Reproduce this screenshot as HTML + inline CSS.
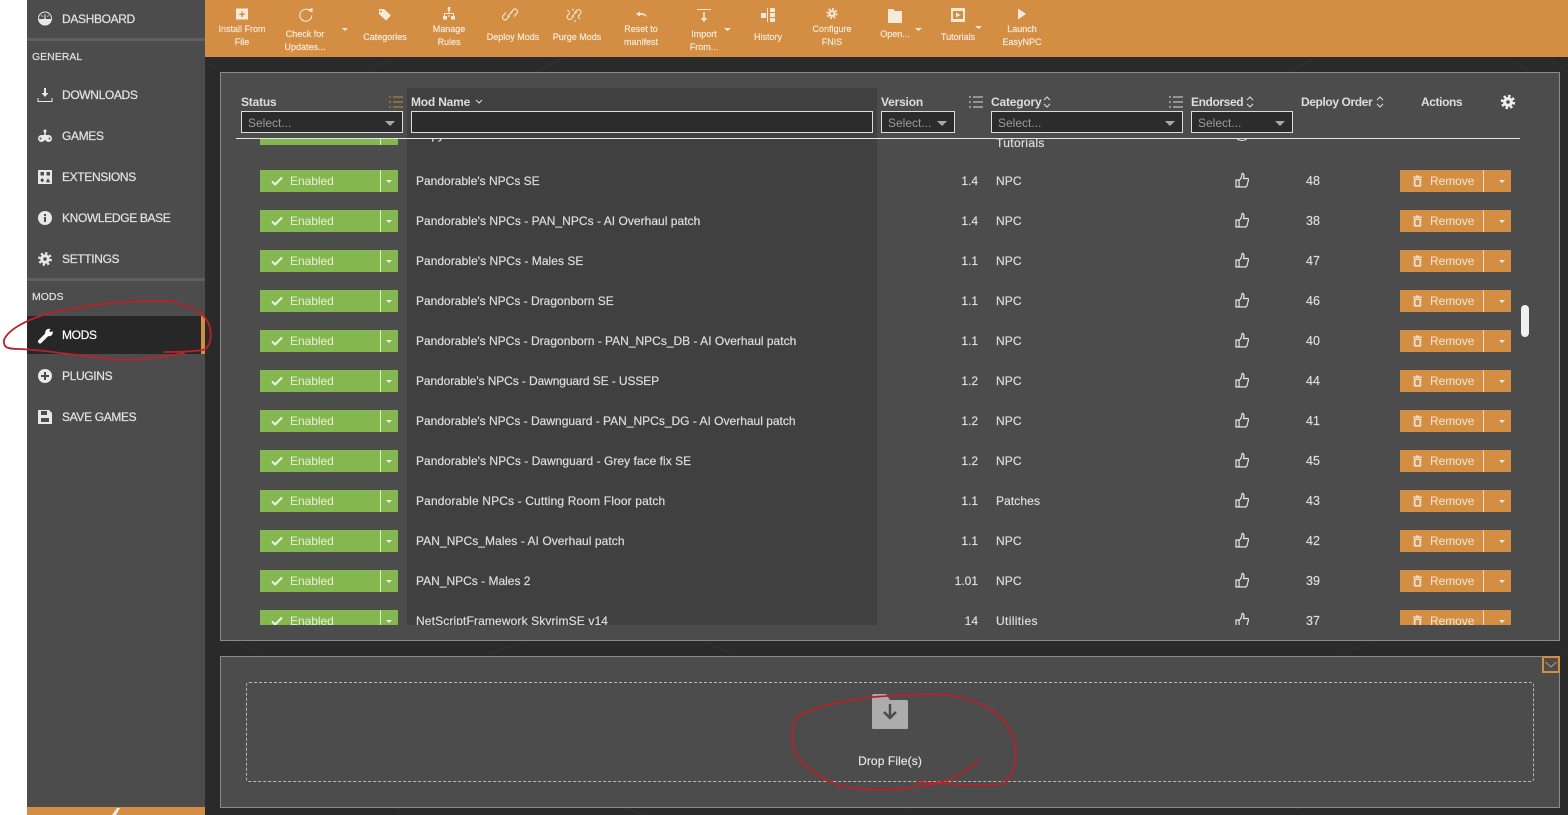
<!DOCTYPE html>
<html><head><meta charset="utf-8"><style>
html,body{margin:0;padding:0;background:#fff}
#p{position:relative;width:1568px;height:815px;overflow:hidden;background:#fff;font-family:"Liberation Sans",sans-serif;color:#ddd}
.a{position:absolute}
.t{position:absolute;white-space:nowrap;line-height:14px}
.n{font-size:12px;left:62px;color:#e4e4e4;letter-spacing:-.35px;-webkit-text-stroke:.2px}
.h{font-size:10.5px;left:32px;color:#e4e4e4;-webkit-text-stroke:.15px}
.c{position:absolute;text-align:center;transform:translateX(-50%);white-space:nowrap;font-size:9px;line-height:13px;color:#f8ecdc;-webkit-text-stroke:.15px}
.th{font-size:12px;font-weight:bold;color:#ddd;top:95px;letter-spacing:-.2px}
.sel{position:absolute;top:111px;height:20px;border:1px solid #ddd;background:#2b2c2b;font-size:12px;line-height:22px;color:#9a9a9a;text-indent:6px;box-sizing:content-box}
.sel i{position:absolute;right:7px;top:9px;border:5px solid transparent;border-top:5px solid #aaa;border-bottom:0}
.r{position:absolute;left:0;width:1340px;height:40px}
.en{position:absolute;left:40px;top:9px;width:138px;height:22px;background:#84b750;color:#e6f0d8;font-size:12px;line-height:22px}
.en b{position:absolute;left:30px;font-weight:normal;letter-spacing:-.05px}
.en u{position:absolute;left:120px;top:0;width:1px;height:22px;background:#dcebc8}
.en s,.rm s{position:absolute;right:6px;top:10px;border:3px solid transparent;border-top:3px solid #eee;border-bottom:0}
.en svg{position:absolute;left:11px;top:6px}
.m{position:absolute;left:196px;top:13px;font-size:12px;line-height:14px;color:#ddd;white-space:nowrap;-webkit-text-stroke:.2px}
.v{position:absolute;right:582px;top:13px;font-size:12px;line-height:14px;color:#ddd;-webkit-text-stroke:.2px}
.g{position:absolute;left:776px;top:13px;font-size:12px;line-height:14px;color:#ddd;letter-spacing:.1px;-webkit-text-stroke:.2px}
.up{position:absolute;left:1015px;top:11px}
.o{position:absolute;left:1086px;top:13px;font-size:12.5px;line-height:14px;color:#ddd;-webkit-text-stroke:.2px}
.rm{position:absolute;left:1180px;top:9px;width:111px;height:22px;background:#d48e43;color:#f4e6d4;font-size:12px;line-height:22px}
.rm b{position:absolute;left:30px;font-weight:normal;letter-spacing:-.05px}
.rm u{position:absolute;left:83px;top:0;width:1px;height:22px;background:#eedcc4}
.rm svg{position:absolute;left:12px;top:5px}
</style></head><body><div id="p">
<svg width="0" height="0" style="position:absolute"><defs>
<symbol id="ck" viewBox="0 0 12 10"><path d="M1 5.500l3.200 3L11 1.500" fill="none" stroke="#f0f6e6" stroke-width="2"/></symbol>
<symbol id="tr" viewBox="0 0 10 12"><path d="M3.500 1.500V.5h3v1H9.500v1.200H.5V1.500zM1.300 3.500h7.400V11.500H1.300zM3 5v5h4V5z" fill="#f4e6d4" fill-rule="evenodd"/></symbol>
<symbol id="th" viewBox="0 0 14 16"><path d="M1 8h3v7H1zM4 8.500C6 7 7 4.500 7 1.500c2-.5 2.500 2 1.500 5h4c1 0 1.200 1 .8 2l-1.300 5c-.3.8-.8 1.500-2 1.500H6c-1 0-1.500-.500-2-1" fill="none" stroke="#e6e6e6" stroke-width="1.200"/></symbol>
</defs></svg>

<!-- background -->
<div class="a" style="left:205px;top:0;width:1363px;height:815px;background:#2a2a2a"></div>
<svg class="a" style="left:205px;top:57px" width="1363" height="758"><g stroke="#333" fill="none"><path d="M0 5L16 15M160 15L190 0M330 15L360 0M1085 15L1110 0M1300 0L1325 15M1340 0L1363 15M30 585L60 598M280 598L320 585M500 585L530 598M1130 598L1170 585M1340 585L1363 598M190 752L230 745M700 752L740 745M1090 752L1130 745M400 745L440 758"/></g></svg>

<!-- sidebar -->
<div class="a" style="left:27px;top:0;width:178px;height:815px;background:#4c4c4c"></div>
<div class="a" style="left:27px;top:38px;width:178px;height:3px;background:#5f5f5f"></div>
<div class="a" style="left:27px;top:278px;width:178px;height:3px;background:#5f5f5f"></div>
<div class="a" style="left:27px;top:316px;width:178px;height:38px;background:#272727"></div>
<div class="a" style="left:201px;top:316px;width:4px;height:38px;background:#d48e43"></div>
<div class="a" style="left:27px;top:807px;width:178px;height:8px;background:#d48e43"></div>
<svg class="a" style="left:105px;top:807px" width="16" height="8"><path d="M7 8L12 1h3L11 8z" fill="#f0f0f0"/></svg>
<div class="t n" style="top:12px">DASHBOARD</div>
<div class="t h" style="top:50px">GENERAL</div>
<div class="t n" style="top:88px">DOWNLOADS</div>
<div class="t n" style="top:129px">GAMES</div>
<div class="t n" style="top:170px">EXTENSIONS</div>
<div class="t n" style="top:211px">KNOWLEDGE BASE</div>
<div class="t n" style="top:252px">SETTINGS</div>
<div class="t h" style="top:290px">MODS</div>
<div class="t n" style="top:328px;color:#fff">MODS</div>
<div class="t n" style="top:369px">PLUGINS</div>
<div class="t n" style="top:410px">SAVE GAMES</div>
<svg class="a" style="left:0;top:0" width="60" height="430"><g fill="#e8e8e8">
<circle cx="45" cy="18.500" r="6.500" fill="none" stroke="#e8e8e8"/><path d="M38.500 19h13a6.500 6.500 0 0 1-13 0z"/><path d="M44.600 14h.8l.3 5h-1.400zM41 15.500l.6-.5 1.400 1.500-.6.5zM49 15.500l-.6-.5-1.400 1.500.6.500z"/>
<path d="M44 88h2v5h2.500L45 97l-3.500-4H44zM38.500 98v3h13v-3h1v4h-15v-4z"/>
<path d="M44.200 130h1.600v5h-1.600z"/><circle cx="45" cy="131" r="1.500"/><circle cx="41.500" cy="138.500" r="3.500"/><circle cx="48.500" cy="138.500" r="3.500"/><rect x="41" y="135" width="8" height="5"/>
<path d="M38 170h14v14H38z"/>
<circle cx="45" cy="218" r="7"/>
<circle cx="45" cy="259" r="4.800"/><circle cx="45" cy="259" r="5.800" fill="none" stroke="#e8e8e8" stroke-width="2.200" stroke-dasharray="2.300 2.250"/>
<circle cx="45" cy="376" r="7"/>
<path d="M38 410h11l3 3v11H38z"/></g>
<g fill="#4c4c4c"><rect x="40.500" y="172" width="3.500" height="3.500"/><rect x="46.500" y="172" width="3.500" height="3.500"/><path d="M42.200 178l2 2.200-2 2.200-2-2.200z"/><path d="M48 178l2.200 4.200h-4.400z"/><rect x="44" y="217" width="2" height="5"/><rect x="44" y="214" width="2" height="2"/><circle cx="45" cy="259" r="1.800"/><rect x="41" y="375" width="8" height="2"/><rect x="44" y="372" width="2" height="8"/><rect x="41" y="411" width="6" height="4"/><rect x="41" y="418" width="8" height="4"/><circle cx="40.500" cy="138.500" r="1"/><circle cx="49.500" cy="138.500" r="1"/></g>
<path d="M40 341.500l8.500-8.500" stroke="#fff" stroke-width="4" stroke-linecap="round" fill="none"/><circle cx="49" cy="332.500" r="3.800" fill="#fff"/><path d="M50 331.500l3.500-3.500" stroke="#272727" stroke-width="2.500" fill="none"/></svg>

<!-- toolbar -->
<div class="a" style="left:205px;top:0;width:1363px;height:57px;background:#d48e43"></div>
<div class="c" style="left:242px;top:23px">Install From<br>File</div>
<div class="c" style="left:305px;top:28px">Check for<br>Updates...</div>
<div class="c" style="left:385px;top:31px">Categories</div>
<div class="c" style="left:449px;top:23px">Manage<br>Rules</div>
<div class="c" style="left:513px;top:31px">Deploy Mods</div>
<div class="c" style="left:577px;top:31px">Purge Mods</div>
<div class="c" style="left:641px;top:23px">Reset to<br>manifest</div>
<div class="c" style="left:704px;top:28px">Import<br>From...</div>
<div class="c" style="left:768px;top:31px">History</div>
<div class="c" style="left:832px;top:23px">Configure<br>FNIS</div>
<div class="c" style="left:895px;top:28px">Open...</div>
<div class="c" style="left:958px;top:31px">Tutorials</div>
<div class="c" style="left:1022px;top:23px">Launch<br>EasyNPC</div>
<svg class="a" style="left:205px;top:0" width="840" height="40"><g fill="#f6ead9">
<path d="M31 8.500h12v11H31zM36.300 11.500v2h-2v1.500h2v2h1.500v-2h2v-1.500h-2v-2z" fill-rule="evenodd"/>
<path d="M105.500 11.500a6 6 0 1 0 1.300 4" fill="none" stroke="#f6ead9" stroke-width="1.100"/><path d="M103 9.500l4.500-1.500v4.800z"/>
<path d="M174 9h5l7 6.500-5 5-7-6.500zM176 10.500a1 1 0 1 0 .1 0z" fill-rule="evenodd"/>
<path d="M242.800 7h2.400v4h-2.400zM243.500 11h1v2h-1zM239 13h10v1h-10zM239 14h1v2h-1zM248 14h1v2h-1zM238 16h4v3.500h-4zM246 16h4v3.500h-4zM243 15.500h2v1h-2z"/>
<path d="M305.500 13l3-3.500c2.200-1.500 5 1 3.500 3.500l-3 3.500M304.500 16l-3 3.500c-2.200 1.500-5-1-3.500-3.500l3-3.500M302.500 16.500l5-5" fill="none" stroke="#f6ead9" stroke-width="1.100"/>
<path d="M369.500 13l2.500-3c2.200-1.500 5 1 3.500 3.500l-2.500 3M368.500 16l-2.500 3c-2.200 1.500-5-1-3.500-3.500l2.500-3M367 16.500l5-5M368 8.500v2.500M362.500 10l2 2M375 19l-2-2M370 20v2" fill="none" stroke="#f6ead9"/>
<path d="M431 14l4-2.500v1.700c3.500-.2 6 1 7 3.800-2-1.800-4.500-2.300-7-2.100v1.600z"/>
<path d="M492 9h14v1h-14zM498.200 12h1.600v6h2.700l-3.500 4-3.500-4h2.700z"/>
<path d="M556 13h5v5h-5zM562 8h1v14h-1zM565 8h5v4h-5zM565 13h5v4h-5zM565 18h5v4h-5z"/>
<circle cx="627" cy="13.500" r="3.500"/><circle cx="627" cy="13.500" r="4.600" fill="none" stroke="#f6ead9" stroke-width="1.800" stroke-dasharray="1.900 1.700"/><circle cx="627" cy="13.500" r="1.400" fill="#d48e43"/>
<path d="M683 9h5l2 2h7v12h-14z"/>
<path d="M746 8h14v14h-14zM748 11v8h10v-8zM751 12.500l4.500 2.500-4.500 2.500z" fill-rule="evenodd"/>
<path d="M813 8.500l8 5.500-8 5.500z"/></g></svg>
<svg class="a" style="left:335px;top:25px" width="650" height="10"><g fill="#f6ead9"><path d="M7 3h6l-3 3zM389 3h7l-3.500 3zM580 3h7l-3.500 3zM640 1h7l-3.500 3z"/></g></svg>

<!-- main panel -->
<div class="a" style="left:220px;top:72px;width:1338px;height:567px;background:#4c4c4c;border:1px solid #8a8a8a"></div>
<div class="a" style="left:407px;top:88px;width:470px;height:537px;background:#404040"></div>

<div class="t th" style="left:241px">Status</div>
<div class="t th" style="left:411px">Mod Name</div>
<div class="t th" style="left:881px">Version</div>
<div class="t th" style="left:991px">Category</div>
<div class="t th" style="left:1191px;letter-spacing:-.4px">Endorsed</div>
<div class="t th" style="left:1301px;letter-spacing:-.4px">Deploy Order</div>
<div class="t th" style="left:1421px;letter-spacing:-.4px">Actions</div>
<svg class="a" style="left:380px;top:92px" width="1140" height="20">
<g fill="none" stroke="#c98a45"><path d="M13 5h10M13 10h10M13 15h10" /><path d="M9 5h2M9 10h2M9 15h2"/></g>
<g fill="none" stroke="#ddd"><path d="M593 5h10M593 10h10M593 15h10M589 5h2M589 10h2M589 15h2M793 5h10M793 10h10M793 15h10M789 5h2M789 10h2M789 15h2"/>
<path d="M96 8l3 3 3-3M664 8l3-3 3 3M664 12l3 3 3-3M867 8l3-3 3 3M867 12l3 3 3-3M997 8l3-3 3 3M997 12l3 3 3-3"/></g>
<circle cx="1128" cy="10" r="5" fill="#eee"/><circle cx="1128" cy="10" r="6" fill="none" stroke="#eee" stroke-width="2.400" stroke-dasharray="2.500 2.200"/><circle cx="1128" cy="10" r="1.800" fill="#4c4c4c"/>
</svg>
<div class="sel" style="left:241px;width:160px">Select...<i></i></div>
<div class="sel" style="left:411px;width:460px"></div>
<div class="sel" style="left:881px;width:72px">Select...<i></i></div>
<div class="sel" style="left:991px;width:190px">Select...<i></i></div>
<div class="sel" style="left:1191px;width:100px">Select...<i></i></div>
<div class="a" style="left:236px;top:138px;width:1284px;height:1px;background:#e4e4e4"></div>

<!-- rows -->
<div class="a" style="left:220px;top:139px;width:1320px;height:486px;overflow:hidden">
<div class="a" style="left:40px;top:-1px;width:138px;height:7px;background:#84b750"><div class="a" style="left:120px;top:0;width:1px;height:7px;background:#dcebc8"></div></div>
<div class="m" style="top:-11px">Copy</div>
<div class="t" style="left:776px;top:-3px;font-size:12px;color:#ddd;letter-spacing:.35px;-webkit-text-stroke:.2px">Tutorials</div>
<svg class="a" style="left:1017px;top:0" width="10" height="2"><path d="M0 0q5 3 10 0" stroke="#ddd" fill="none"/></svg>

<div class="r" style="top:22px"><div class="en"><svg width="12" height="10"><use href="#ck"/></svg><b>Enabled</b><u></u><s></s></div><div class="m">Pandorable's NPCs SE</div><div class="v">1.4</div><div class="g">NPC</div><svg class="up" width="14" height="16"><use href="#th"/></svg><div class="o">48</div><div class="rm"><svg width="11" height="12"><use href="#tr"/></svg><b>Remove</b><u></u><s></s></div></div>
<div class="r" style="top:62px"><div class="en"><svg width="12" height="10"><use href="#ck"/></svg><b>Enabled</b><u></u><s></s></div><div class="m" style="letter-spacing:.03px">Pandorable's NPCs - PAN_NPCs - AI Overhaul patch</div><div class="v">1.4</div><div class="g">NPC</div><svg class="up" width="14" height="16"><use href="#th"/></svg><div class="o">38</div><div class="rm"><svg width="11" height="12"><use href="#tr"/></svg><b>Remove</b><u></u><s></s></div></div>
<div class="r" style="top:102px"><div class="en"><svg width="12" height="10"><use href="#ck"/></svg><b>Enabled</b><u></u><s></s></div><div class="m" style="letter-spacing:.04px">Pandorable's NPCs - Males SE</div><div class="v">1.1</div><div class="g">NPC</div><svg class="up" width="14" height="16"><use href="#th"/></svg><div class="o">47</div><div class="rm"><svg width="11" height="12"><use href="#tr"/></svg><b>Remove</b><u></u><s></s></div></div>
<div class="r" style="top:142px"><div class="en"><svg width="12" height="10"><use href="#ck"/></svg><b>Enabled</b><u></u><s></s></div><div class="m">Pandorable's NPCs - Dragonborn SE</div><div class="v">1.1</div><div class="g">NPC</div><svg class="up" width="14" height="16"><use href="#th"/></svg><div class="o">46</div><div class="rm"><svg width="11" height="12"><use href="#tr"/></svg><b>Remove</b><u></u><s></s></div></div>
<div class="r" style="top:182px"><div class="en"><svg width="12" height="10"><use href="#ck"/></svg><b>Enabled</b><u></u><s></s></div><div class="m">Pandorable's NPCs - Dragonborn - PAN_NPCs_DB - AI Overhaul patch</div><div class="v">1.1</div><div class="g">NPC</div><svg class="up" width="14" height="16"><use href="#th"/></svg><div class="o">40</div><div class="rm"><svg width="11" height="12"><use href="#tr"/></svg><b>Remove</b><u></u><s></s></div></div>
<div class="r" style="top:222px"><div class="en"><svg width="12" height="10"><use href="#ck"/></svg><b>Enabled</b><u></u><s></s></div><div class="m" style="letter-spacing:-.1px">Pandorable's NPCs - Dawnguard SE - USSEP</div><div class="v">1.2</div><div class="g">NPC</div><svg class="up" width="14" height="16"><use href="#th"/></svg><div class="o">44</div><div class="rm"><svg width="11" height="12"><use href="#tr"/></svg><b>Remove</b><u></u><s></s></div></div>
<div class="r" style="top:262px"><div class="en"><svg width="12" height="10"><use href="#ck"/></svg><b>Enabled</b><u></u><s></s></div><div class="m">Pandorable's NPCs - Dawnguard - PAN_NPCs_DG - AI Overhaul patch</div><div class="v">1.2</div><div class="g">NPC</div><svg class="up" width="14" height="16"><use href="#th"/></svg><div class="o">41</div><div class="rm"><svg width="11" height="12"><use href="#tr"/></svg><b>Remove</b><u></u><s></s></div></div>
<div class="r" style="top:302px"><div class="en"><svg width="12" height="10"><use href="#ck"/></svg><b>Enabled</b><u></u><s></s></div><div class="m" style="letter-spacing:.03px">Pandorable's NPCs - Dawnguard - Grey face fix SE</div><div class="v">1.2</div><div class="g">NPC</div><svg class="up" width="14" height="16"><use href="#th"/></svg><div class="o">45</div><div class="rm"><svg width="11" height="12"><use href="#tr"/></svg><b>Remove</b><u></u><s></s></div></div>
<div class="r" style="top:342px"><div class="en"><svg width="12" height="10"><use href="#ck"/></svg><b>Enabled</b><u></u><s></s></div><div class="m" style="letter-spacing:.14px">Pandorable NPCs - Cutting Room Floor patch</div><div class="v">1.1</div><div class="g">Patches</div><svg class="up" width="14" height="16"><use href="#th"/></svg><div class="o">43</div><div class="rm"><svg width="11" height="12"><use href="#tr"/></svg><b>Remove</b><u></u><s></s></div></div>
<div class="r" style="top:382px"><div class="en"><svg width="12" height="10"><use href="#ck"/></svg><b>Enabled</b><u></u><s></s></div><div class="m" style="letter-spacing:.06px">PAN_NPCs_Males - AI Overhaul patch</div><div class="v">1.1</div><div class="g">NPC</div><svg class="up" width="14" height="16"><use href="#th"/></svg><div class="o">42</div><div class="rm"><svg width="11" height="12"><use href="#tr"/></svg><b>Remove</b><u></u><s></s></div></div>
<div class="r" style="top:422px"><div class="en"><svg width="12" height="10"><use href="#ck"/></svg><b>Enabled</b><u></u><s></s></div><div class="m">PAN_NPCs - Males 2</div><div class="v">1.01</div><div class="g">NPC</div><svg class="up" width="14" height="16"><use href="#th"/></svg><div class="o">39</div><div class="rm"><svg width="11" height="12"><use href="#tr"/></svg><b>Remove</b><u></u><s></s></div></div>
<div class="r" style="top:462px"><div class="en"><svg width="12" height="10"><use href="#ck"/></svg><b>Enabled</b><u></u><s></s></div><div class="m" style="letter-spacing:.13px">NetScriptFramework SkyrimSE v14</div><div class="v">14</div><div class="g" style="letter-spacing:.35px">Utilities</div><svg class="up" width="14" height="16"><use href="#th"/></svg><div class="o">37</div><div class="rm"><svg width="11" height="12"><use href="#tr"/></svg><b>Remove</b><u></u><s></s></div></div>
</div>
<div class="a" style="left:1521px;top:305px;width:8px;height:32px;background:#f0f0f0;border-radius:4px"></div>

<!-- drop panel -->
<div class="a" style="left:220px;top:656px;width:1338px;height:150px;background:#4c4c4c;border:1px solid #8a8a8a"></div>
<div class="a" style="left:246px;top:682px;width:1286px;height:98px;border:1px dashed #b8b8b8;border-radius:3px"></div>
<svg class="a" style="left:1542px;top:656px" width="18" height="18"><rect x="1" y="1" width="16" height="15" fill="none" stroke="#d48e43" stroke-width="2"/><path d="M3.500 6l5.500 5 5.500-5" fill="none" stroke="#c99a63" stroke-width="1"/></svg>
<svg class="a" style="left:872px;top:694px" width="36" height="36"><path d="M0 2q0-2 2-2h12l4 6h16q2 0 2 2v26q0 1-2 1H2q-2 0-2-1z" fill="#acacac"/><path d="M18 10v13M12 18l6 6 6-6" fill="none" stroke="#4c4c4c" stroke-width="2.500"/></svg>
<div class="t" style="left:890px;top:754px;transform:translateX(-50%);font-size:12px;color:#e8e8e8;letter-spacing:.1px;-webkit-text-stroke:.15px">Drop File(s)</div>

<!-- annotations -->
<svg class="a" style="left:0;top:0" width="1568" height="815"><g fill="none" stroke="#b8232a" stroke-width="1.800" stroke-linecap="round" stroke-linejoin="round">
<path d="M164 352C180 352 196 351 203 350C210 348 212 338 210 328C207 315 195 306 167 301C130 300 90 304 50 313C25 320 8 330 4 340C3 348 8 349 20 349C45 350 80 356 120 360C140 360 170 356 184 353"/>
<path d="M978 760C965 775 945 782 925 786C895 791 865 790 845 787C825 782 805 768 796 755C790 740 792 725 796 718C810 708 835 702 873 697C900 695 930 694 947 695C965 697 982 704 995 712C1007 722 1014 735 1016 750C1016 765 1013 775 1003 784C985 786 945 784 917 782"/>
</g></svg>
</div></body></html>
